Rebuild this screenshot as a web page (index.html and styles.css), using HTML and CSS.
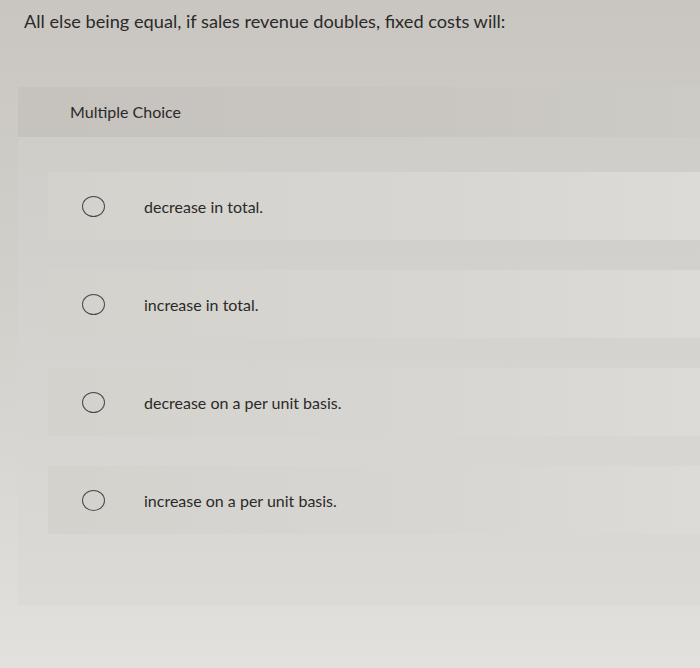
FILE: index.html
```html
<!DOCTYPE html>
<html lang="en">
<head>
<meta charset="utf-8">
<title>Multiple Choice</title>
<link rel="stylesheet" href="styles.css">
</head>
<body>
<div class="page">
  <p class="question">All else being equal, if sales revenue doubles, fixed costs will:</p>
  <section class="panel">
    <div class="panel-head">Multiple Choice</div>
    <div class="panel-body">
      <label class="option"><span class="radio"></span><span class="label">decrease in total.</span></label>
      <label class="option"><span class="radio"></span><span class="label">increase in total.</span></label>
      <label class="option"><span class="radio"></span><span class="label">decrease on a per unit basis.</span></label>
      <label class="option"><span class="radio"></span><span class="label">increase on a per unit basis.</span></label>
    </div>
  </section>
</div>
</body>
</html>
```
FILE: styles.css
```css
html, body {
  margin: 0;
  padding: 0;
}
body {
  width: 700px;
  height: 668px;
  overflow: hidden;
  font-family: Lato, "Open Sans", "Liberation Sans", sans-serif;
  color: #2b2a29;
  background: linear-gradient(180deg, #c9c6c1 0%, #d2d0cb 45%, #dcdad6 80%, #e2e1de 100%);
}
.page {
  display: flex;
  flex-direction: column;
}
.question {
  margin: 0;
  padding: 10px 0 0 24px;
  font-size: 18.2px;
  line-height: 22px;
  height: 87px;
  box-sizing: border-box;
}
.panel {
  margin-left: 18px;
  height: 518px;
  display: flex;
  flex-direction: column;
  background: linear-gradient(180deg, #ceccc7 0%, #d5d3cf 50%, #dbdad6 100%);
}
.panel-head {
  height: 50px;
  box-sizing: border-box;
  padding: 15px 0 0 52px;
  font-size: 16px;
  line-height: 20px;
  background: linear-gradient(90deg, #c6c3be 0%, #c9c6c1 60%, #cdcbc6 100%);
}
.panel-body {
  display: flex;
  flex-direction: column;
  gap: 30px;
  padding: 35px 0 0 30px;
}
.option {
  display: flex;
  align-items: center;
  height: 68px;
  padding-left: 34px;
  background: linear-gradient(90deg, #d4d2cd 0%, #d8d6d2 60%, #dcdbd7 100%);
  font-size: 16px;
}
.radio {
  width: 21px;
  height: 19px;
  border: 1.5px solid #4a4a4a;
  border-radius: 50%;
  flex: none;
}
.label {
  margin-left: 39px;
}
```
